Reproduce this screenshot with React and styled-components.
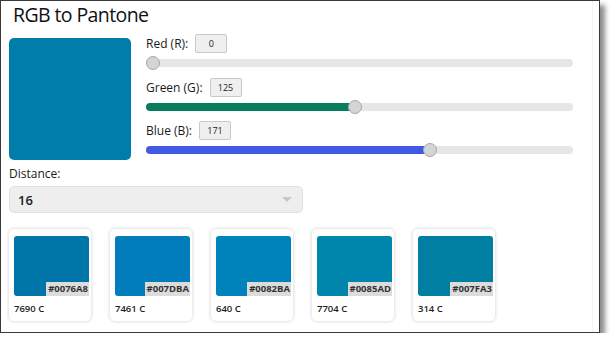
import React, { useState } from 'react';
import styled, { createGlobalStyle } from 'styled-components';

const GlobalStyle = createGlobalStyle`
  body {
    margin: 0;
    background: #fff;
    font-family: 'Open Sans', 'Noto Sans', sans-serif;
  }
`;

const Frame = styled.div`
  width: 598px;
  height: 331px;
  border: 1px solid #3a3a3a;
  box-shadow: 5px 5px 5px rgba(0, 0, 0, 0.45);
  background: #fff;
  overflow: hidden;
  box-sizing: content-box;
`;

const Page = styled.div`
  padding: 0 8px;
  margin-right: 6px;
  border-right: 1px solid #f2f2f2;
  height: 100%;
`;

const Title = styled.h1`
  margin: 0;
  padding: 0 0 0 4px;
  font-size: 19.5px;
  font-weight: 400;
  letter-spacing: -0.6px;
  color: #111;
  height: 37px;
  line-height: 28px;
`;

const Top = styled.div`
  display: flex;
  gap: 15px;
  height: 122px;
`;

const Preview = styled.div`
  width: 122px;
  height: 122px;
  border-radius: 5px;
  background: ${(p) => p.$color};
  flex-shrink: 0;
`;

const Controls = styled.div`
  display: flex;
  flex-direction: column;
  width: 427px;
  margin-top: -4px;
`;

const Group = styled.div`
  display: flex;
  flex-direction: column;
  height: 43.5px;
  flex-shrink: 0;
`;

const LabelRow = styled.div`
  display: flex;
  align-items: center;
  gap: 7px;
  height: 19px;
`;

const Label = styled.span`
  font-size: 12px;
  color: #1a1a1a;
`;

const ValueBox = styled.div`
  width: 30px;
  height: 17px;
  border: 1px solid #c9c9c9;
  background: #efefef;
  border-radius: 2px;
  font-size: 9px;
  display: flex;
  align-items: center;
  justify-content: center;
  color: #222;
`;

const Range = styled.input.attrs({ type: 'range', min: 0, max: 255 })`
  -webkit-appearance: none;
  appearance: none;
  width: 427px;
  height: 8px;
  margin: 6px 0 0 0;
  border-radius: 4px;
  background: ${(p) =>
    `linear-gradient(to right, ${p.$fill} 0, ${p.$fill} calc(7px + ${p.$pct} * (100% - 14px)), #e6e6e6 calc(7px + ${p.$pct} * (100% - 14px)), #e6e6e6 100%)`};
  outline: none;

  &::-webkit-slider-thumb {
    -webkit-appearance: none;
    width: 14px;
    height: 14px;
    border-radius: 50%;
    background: #d4d4d4;
    border: 1px solid #a8a8a8;
    box-sizing: border-box;
  }
`;

const DistanceLabel = styled.div`
  font-size: 12px;
  color: #1a1a1a;
  margin-top: 4px;
  height: 19px;
  line-height: 19px;
`;

const Select = styled.div`
  width: 294px;
  height: 27px;
  box-sizing: border-box;
  margin-top: 3px;
  background: #eeeeee;
  border: 1px solid #e0e0e0;
  border-radius: 5px;
  display: flex;
  align-items: center;
  justify-content: space-between;
  padding: 0 8px;
  font-size: 13px;
  font-weight: 600;
  color: #222;
`;

const Caret = styled.span`
  width: 0;
  height: 0;
  border-left: 5px solid transparent;
  border-right: 5px solid transparent;
  border-top: 5px solid #c8c8c8;
  margin-right: 2px;
`;

const Cards = styled.div`
  display: flex;
  gap: 17px;
  margin-top: 15px;
  margin-left: -1px;
`;

const Card = styled.div`
  width: 84px;
  height: 94px;
  box-sizing: border-box;
  border: 1px solid #ececec;
  border-radius: 6px;
  box-shadow: 0 0 3px rgba(0, 0, 0, 0.12);
  padding: 7px 4px 0 5px;
`;

const Swatch = styled.div`
  position: relative;
  width: 75px;
  height: 60px;
  border-radius: 3px 3px 0 3px;
  background: ${(p) => p.$color};
`;

const Hex = styled.span`
  position: absolute;
  right: 0;
  bottom: 0;
  background: #dcdcdc;
  font-size: 9.5px;
  font-weight: 700;
  color: #333;
  padding: 0 1px 0 2px;
  line-height: 14px;
`;

const Name = styled.div`
  font-size: 9.5px;
  font-weight: 600;
  color: #222;
  margin-top: 6px;
`;

const channels = [
  { key: 'r', label: 'Red (R):', fill: '#e6e6e6' },
  { key: 'g', label: 'Green (G):', fill: '#087d5c' },
  { key: 'b', label: 'Blue (B):', fill: '#4259e6' },
];

const matches = [
  { hex: '#0076A8', name: '7690 C' },
  { hex: '#007DBA', name: '7461 C' },
  { hex: '#0082BA', name: '640 C' },
  { hex: '#0085AD', name: '7704 C' },
  { hex: '#007FA3', name: '314 C' },
];

const App = () => {
  const [rgb, setRgb] = useState({ r: 0, g: 125, b: 171 });

  const handleChange = (key) => (event) => {
    setRgb({ ...rgb, [key]: Number(event.target.value) });
  };

  return (
    <Frame>
      <GlobalStyle />
      <Page>
        <Title>RGB to Pantone</Title>
        <Top>
          <Preview $color={`rgb(${rgb.r}, ${rgb.g}, ${rgb.b})`} />
          <Controls>
            {channels.map((c) => (
              <Group key={c.key}>
                <LabelRow>
                  <Label>{c.label}</Label>
                  <ValueBox>{rgb[c.key]}</ValueBox>
                </LabelRow>
                <Range
                  value={rgb[c.key]}
                  onChange={handleChange(c.key)}
                  $fill={c.fill}
                  $pct={rgb[c.key] / 255}
                />
              </Group>
            ))}
          </Controls>
        </Top>
        <DistanceLabel>Distance:</DistanceLabel>
        <Select>
          <span>16</span>
          <Caret />
        </Select>
        <Cards>
          {matches.map((m) => (
            <Card key={m.hex}>
              <Swatch $color={m.hex}>
                <Hex>{m.hex}</Hex>
              </Swatch>
              <Name>{m.name}</Name>
            </Card>
          ))}
        </Cards>
      </Page>
    </Frame>
  );
};

export default App;
